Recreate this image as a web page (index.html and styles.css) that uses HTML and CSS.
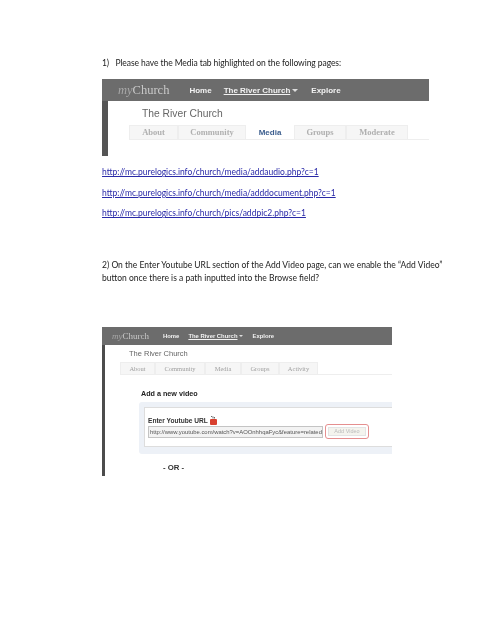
FILE: index.html
```html
<!DOCTYPE html>
<html lang="en">
<head>
    <meta charset="UTF-8">
    <title>Media tab notes</title>
    <link rel="stylesheet" href="styles.css">
</head>
<body>
    <div class="page">
        <p class="item-one">1)&nbsp;&nbsp; Please have the Media tab highlighted on the following pages:</p>

        <div class="shot shot-one">
            <div class="topbar">
                <span class="logo"><i>my</i>Church</span>
                <span class="nav-link">Home</span>
                <span class="nav-link nav-current">The River Church</span>
                <span class="caret"></span>
                <span class="nav-link">Explore</span>
            </div>
            <div class="shot-body">
                <div class="church-name">The River Church</div>
                <div class="tabs">
                    <span class="tab">About</span>
                    <span class="tab">Community</span>
                    <span class="tab tab-active">Media</span>
                    <span class="tab">Groups</span>
                    <span class="tab">Moderate</span>
                </div>
            </div>
        </div>

        <div class="links">
            <a href="#">http://mc.purelogics.info/church/media/addaudio.php?c=1</a>
            <a href="#">http://mc.purelogics.info/church/media/adddocument.php?c=1</a>
            <a href="#">http://mc.purelogics.info/church/pics/addpic2.php?c=1</a>
        </div>

        <p class="item-two">2) On the Enter Youtube URL section of the Add Video page, can we enable the “Add Video” button once there is a path inputted into the Browse field?</p>

        <div class="shot shot-two">
            <div class="topbar">
                <span class="logo"><i>my</i>Church</span>
                <span class="nav-link">Home</span>
                <span class="nav-link nav-current">The River Church</span>
                <span class="caret"></span>
                <span class="nav-link">Explore</span>
            </div>
            <div class="shot-body">
                <div class="church-name">The River Church</div>
                <div class="tabs">
                    <span class="tab">About</span>
                    <span class="tab">Community</span>
                    <span class="tab">Media</span>
                    <span class="tab">Groups</span>
                    <span class="tab">Activity</span>
                </div>
                <div class="add-title">Add a new video</div>
                <div class="url-box">
                    <div class="url-inner">
                        <div class="url-label">Enter Youtube URL
                            <svg class="yt-icon" width="7" height="9" viewBox="0 0 7 9"><rect x="0" y="3" width="7" height="6" rx="1" fill="#d8402f"/><path d="M1 0.5h1.2M3 0.5v2M4.5 1v1.5" stroke="#444" stroke-width="0.8" fill="none"/></svg>
                        </div>
                        <div class="url-row">
                            <span class="url-input">http://www.youtube.com/watch?v=AOOnhhqaFyc&amp;feature=related</span>
                            <span class="add-outline"><span class="add-button">Add Video</span></span>
                        </div>
                    </div>
                </div>
                <div class="or-text">- OR -</div>
            </div>
        </div>
    </div>
</body>
</html>
```
FILE: styles.css
```css
html, body {
    margin: 0;
    padding: 0;
    background-color: white;
}
.page {
    height: 640px;
    box-sizing: border-box;
    padding: 57px 0 0 102px;
    overflow: hidden;
    font-family: Lato, "Open Sans", sans-serif;
    font-size: 8.5px;
    color: #222;
    filter: blur(0.3px);
}
p {
    margin: 0;
}
.item-one {
    line-height: 12px;
    letter-spacing: -0.07px;
}
.shot {
    font-family: "Liberation Sans", Arial, sans-serif;
}
.shot-one {
    width: 327px;
    height: 77px;
    margin-top: 10px;
    border-left: 6px solid #555;
    box-sizing: border-box;
}
.topbar {
    display: flex;
    align-items: center;
    background-color: #6c6c6c;
    color: #f2f2f2;
    font-weight: bold;
}
.shot-one .topbar {
    height: 22px;
    margin-left: -6px;
    padding-left: 16px;
    font-size: 8px;
}
.logo {
    font-family: "Liberation Serif", serif;
    font-weight: normal;
    color: #c9c9c9;
}
.logo i {
    color: #a8a8a8;
}
.shot-one .logo {
    font-size: 12.5px;
    margin-right: 20px;
}
.shot-one .nav-link {
    margin-right: 12px;
}
.shot-one .nav-current {
    margin-right: 2px;
}
.nav-current {
    text-decoration: underline;
}
.caret {
    width: 0;
    height: 0;
    border-left: 3px solid transparent;
    border-right: 3px solid transparent;
    border-top: 3px solid #ddd;
}
.shot-one .caret {
    margin-right: 13px;
}
.shot-body {
    background-color: white;
}
.church-name {
    color: #666;
}
.shot-one .church-name {
    padding: 7px 0 0 34px;
    font-size: 10.3px;
    line-height: 12px;
}
.tabs {
    display: flex;
    border-bottom: 1px solid #eee;
}
.tab {
    background-color: #f6f6f6;
    border: 1px solid #eeeeee;
    border-bottom: none;
    color: #b0b0b0;
    font-family: "Liberation Serif", serif;
    font-weight: bold;
    box-sizing: border-box;
    text-align: center;
}
.shot-one .tabs {
    margin: 5px 0 0 21px;
    height: 14px;
}
.shot-one .tab {
    font-size: 8.5px;
    line-height: 13px;
}
.shot-one .tab:nth-child(1) { width: 49px; }
.shot-one .tab:nth-child(2) { width: 68px; }
.shot-one .tab:nth-child(3) { width: 48px; }
.shot-one .tab:nth-child(4) { width: 52px; }
.shot-one .tab:nth-child(5) { width: 62px; }
.shot-one .tab-active {
    background-color: white;
    border-color: white;
    color: #3d5f8f;
    font-family: "Liberation Sans", Arial, sans-serif;
    font-size: 8px;
}
.links {
    display: flex;
    flex-direction: column;
    align-items: flex-start;
    gap: 8.5px;
    margin-top: 10px;
    line-height: 12px;
}
.links a {
    color: #2a2aa8;
}
.item-two {
    width: 350px;
    margin-top: 40px;
    line-height: 13px;
}
.shot-two {
    width: 290px;
    height: 149px;
    margin-top: 42px;
    border-left: 3px solid #4c4c4c;
    box-sizing: border-box;
}
.shot-two .topbar {
    height: 18px;
    margin-left: -3px;
    padding-left: 10px;
    font-size: 5.9px;
}
.shot-two .logo {
    font-size: 9px;
    margin-right: 14px;
}
.shot-two .nav-link {
    margin-right: 9px;
}
.shot-two .nav-current {
    margin-right: 2px;
}
.shot-two .caret {
    margin-right: 9px;
    border-width: 2px 2px 0;
}
.shot-two .church-name {
    padding: 4px 0 0 24px;
    font-size: 7.5px;
    line-height: 10px;
}
.shot-two .tabs {
    margin: 3px 0 0 15px;
    height: 12px;
}
.shot-two .tab {
    font-size: 6.5px;
    line-height: 11px;
    font-weight: normal;
    color: #a0a0a0;
}
.shot-two .tab:nth-child(1) { width: 35px; }
.shot-two .tab:nth-child(2) { width: 50px; }
.shot-two .tab:nth-child(3) { width: 36px; }
.shot-two .tab:nth-child(4) { width: 38px; }
.shot-two .tab:nth-child(5) { width: 39px; }
.add-title {
    margin: 14px 0 0 36px;
    font-size: 7.2px;
    font-weight: bold;
    line-height: 10px;
    color: #222;
}
.url-box {
    margin: 3px 0 0 34px;
    padding: 5px 0 7px 5px;
    background-color: #edf1f7;
    border-radius: 3px 0 0 3px;
}
.url-inner {
    background-color: white;
    border: 1px solid #ddd;
    border-right: none;
    padding: 8px 0 7px 3px;
}
.url-label {
    display: flex;
    align-items: flex-end;
    gap: 2px;
    font-size: 6.6px;
    font-weight: bold;
    line-height: 8px;
    color: #333;
}
.url-row {
    display: flex;
    align-items: center;
    margin-top: -1px;
}
.url-input {
    width: 175px;
    height: 12px;
    box-sizing: border-box;
    border: 1px solid #c4c4c4;
    background-color: #f3f3f3;
    font-size: 5.9px;
    line-height: 10px;
    padding-left: 1px;
    color: #555;
    white-space: nowrap;
    overflow: hidden;
}
.add-outline {
    margin-left: 2px;
    padding: 2px;
    border: 1px solid #e58f8f;
    border-radius: 3px;
}
.add-button {
    display: block;
    width: 36px;
    background-color: #f4f4ee;
    border: 1px solid #e4e4e4;
    color: #bbb;
    font-size: 5.5px;
    line-height: 7px;
    text-align: center;
}
.or-text {
    margin: 9px 0 0 58px;
    font-size: 7.8px;
    font-weight: bold;
    line-height: 10px;
    color: #333;
}
```
